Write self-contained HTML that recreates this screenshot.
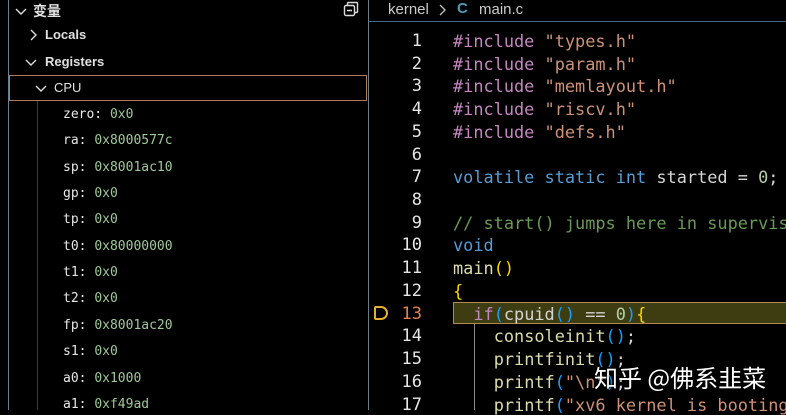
<!DOCTYPE html>
<html><head><meta charset="utf-8"><style>
*{margin:0;padding:0;box-sizing:border-box}
body{width:786px;height:410px;background:#000;overflow:hidden;position:relative;font-family:"Liberation Sans","Noto Sans CJK SC",sans-serif;color:#e0e0e0}
.a{position:absolute;white-space:pre}
.m{font-family:"DejaVu Sans Mono","Liberation Mono",monospace}
.r{font-size:13px;left:63px;color:#e8e8e8}
.r b{font-weight:normal;color:#9fc89a}
.ln{font-size:17px;width:60px;left:362px;text-align:right;color:#e6e6e6}
.c{font-size:16.9px;left:453px;color:#d4d4d4}
.p{color:#c586c0}.s{color:#ce9178}.k{color:#569cd6}.g{color:#6a9955}.f{color:#dcdcaa}.y{color:#ffd700}.cy{color:#179fff}.n{color:#b5cea8}.v{color:#9cdcfe}
svg.ch{position:absolute;fill:none;stroke:#ddd;stroke-width:1.4}
</style></head><body>
<div class="a" style="left:8px;top:0;width:1px;height:410px;background:#6a7f8a"></div>
<div class="a" style="left:368px;top:0;width:1px;height:410px;background:#6a7f8a"></div>
<div class="a" style="left:37px;top:101px;width:1px;height:309px;background:#3c3c3c"></div>
<svg class="ch" style="left:14px;top:4px" width="14" height="14"><path d="M2 5l5 5 5-5"/></svg>
<div class="a" style="left:33px;top:1px;font-size:14px;font-weight:bold">变量</div>
<svg class="ch" style="left:343px;top:1px" width="16" height="16"><rect x="1.5" y="4.5" width="10" height="10" rx="1.5"/><path d="M4.5 4.5V2.5a1 1 0 0 1 1-1h8a1 1 0 0 1 1 1v8a1 1 0 0 1-1 1h-2M4 9.5h5"/></svg>
<svg class="ch" style="left:26px;top:28px" width="14" height="14"><path d="M5 2l5 5-5 5"/></svg>
<div class="a" style="left:45px;top:27px;font-size:13px;font-weight:bold">Locals</div>
<svg class="ch" style="left:24px;top:55px" width="14" height="14"><path d="M2 5l5 5 5-5"/></svg>
<div class="a" style="left:45px;top:54px;font-size:13px;font-weight:bold">Registers</div>
<div class="a" style="left:9px;top:75px;width:358px;height:26px;border:1px solid #b07a60"></div>
<svg class="ch" style="left:34px;top:81px" width="14" height="14"><path d="M2 5l5 5 5-5"/></svg>
<div class="a" style="left:54px;top:80px;font-size:13px">CPU</div>
<div class="a m r" style="top:107px">zero: <b>0x0</b></div>
<div class="a m r" style="top:133px">ra: <b>0x8000577c</b></div>
<div class="a m r" style="top:160px">sp: <b>0x8001ac10</b></div>
<div class="a m r" style="top:186px">gp: <b>0x0</b></div>
<div class="a m r" style="top:212px">tp: <b>0x0</b></div>
<div class="a m r" style="top:239px">t0: <b>0x80000000</b></div>
<div class="a m r" style="top:265px">t1: <b>0x0</b></div>
<div class="a m r" style="top:291px">t2: <b>0x0</b></div>
<div class="a m r" style="top:318px">fp: <b>0x8001ac20</b></div>
<div class="a m r" style="top:344px">s1: <b>0x0</b></div>
<div class="a m r" style="top:371px">a0: <b>0x1000</b></div>
<div class="a m r" style="top:397px">a1: <b>0xf49ad</b></div>

<div class="a" style="left:388px;top:1px;font-size:15px;color:#ccc">kernel</div>
<svg class="ch" style="left:437px;top:4px;stroke:#bbb" width="12" height="12"><path d="M3 1l5 5-5 5"/></svg>
<div class="a" style="left:457px;top:0px;font-size:15px;color:#519aba;font-weight:bold">C</div>
<div class="a" style="left:479px;top:1px;font-size:15px;color:#ccc">main.c</div>
<div class="a" style="left:369px;top:21px;width:417px;height:1px;background:#3d6a7a"></div>
<div class="a" style="left:453px;top:302px;width:333px;height:22px;background:#3e3d12;border:1px solid #b08a50;border-right:none"></div>
<div class="a" style="left:474px;top:324px;width:1px;height:86px;background:#888"></div>
<div class="a" style="left:374px;top:306px;width:14px;height:14px;border:2px solid #e5b02b;border-radius:2px 7px 7px 2px"></div>

<div class="a m ln" style="top:31px">1</div><div class="a m c" style="top:31px"><span class="p">#include</span> <span class="s">"types.h"</span></div>
<div class="a m ln" style="top:54px">2</div><div class="a m c" style="top:54px"><span class="p">#include</span> <span class="s">"param.h"</span></div>
<div class="a m ln" style="top:76px">3</div><div class="a m c" style="top:76px"><span class="p">#include</span> <span class="s">"memlayout.h"</span></div>
<div class="a m ln" style="top:99px">4</div><div class="a m c" style="top:99px"><span class="p">#include</span> <span class="s">"riscv.h"</span></div>
<div class="a m ln" style="top:122px">5</div><div class="a m c" style="top:122px"><span class="p">#include</span> <span class="s">"defs.h"</span></div>
<div class="a m ln" style="top:145px">6</div>
<div class="a m ln" style="top:167px">7</div><div class="a m c" style="top:167px"><span class="k">volatile static int</span> started = <span class="n">0</span>;</div>
<div class="a m ln" style="top:190px">8</div>
<div class="a m ln" style="top:213px">9</div><div class="a m c" style="top:213px"><span class="g">// start() jumps here in supervisor</span></div>
<div class="a m ln" style="top:235px">10</div><div class="a m c" style="top:235px"><span class="k">void</span></div>
<div class="a m ln" style="top:258px">11</div><div class="a m c" style="top:258px"><span class="f">main</span><span class="y">()</span></div>
<div class="a m ln" style="top:281px">12</div><div class="a m c" style="top:281px"><span class="y">{</span></div>
<div class="a m ln" style="top:304px;color:#e8804a">13</div><div class="a m c" style="top:304px">  <span class="p">if</span><span class="cy">(</span>cpuid<span class="cy">()</span> == <span class="n">0</span><span class="cy">)</span><span class="y">{</span></div>
<div class="a m ln" style="top:326px">14</div><div class="a m c" style="top:326px">    <span class="f">consoleinit</span><span class="cy">()</span>;</div>
<div class="a m ln" style="top:349px">15</div><div class="a m c" style="top:349px">    <span class="f">printfinit</span><span class="cy">()</span>;</div>
<div class="a m ln" style="top:372px">16</div><div class="a m c" style="top:372px">    <span class="f">printf</span><span class="cy">(</span><span class="s">"\n"</span><span class="cy">)</span>;</div>
<div class="a m ln" style="top:395px">17</div><div class="a m c" style="top:395px">    <span class="f">printf</span><span class="cy">(</span><span class="s">"xv6 kernel is booting</span></div>
<div class="a" style="left:594px;top:359px;font-size:24px;color:#fff;font-family:'Noto Sans CJK SC',sans-serif;text-shadow:0 0 3px #000">知乎 @佛系韭菜</div>
</body></html>
